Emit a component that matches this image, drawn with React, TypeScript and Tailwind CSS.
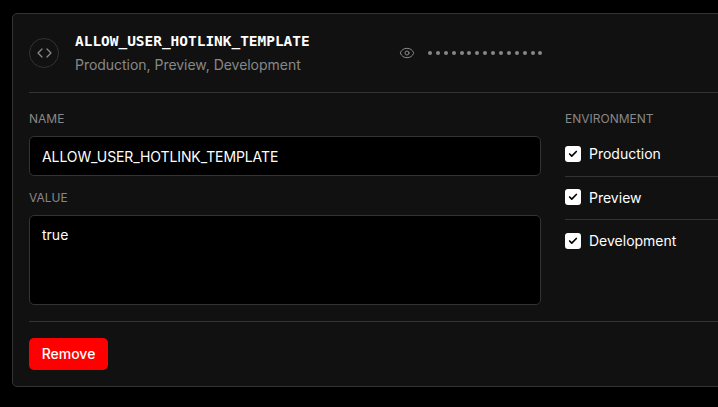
import { Check, Eye } from 'lucide-react';

const environments = ['Production', 'Preview', 'Development'];

function Label({ children }: { children: string }) {
  return <div className="text-[12px] leading-[16px] text-[#888888]">{children}</div>;
}

export default function App() {
  return (
    <div className="h-[407px] w-[718px] overflow-hidden bg-black font-['Inter',sans-serif] text-white">
      <div className="pt-[13px] pl-[12px]">
        <div className="h-[374px] w-[800px] rounded-[5px] border border-[#333333] bg-[#111111] px-4">
          {/* Header */}
          <div className="flex h-[79px] items-center border-b border-[#333333]">
            <div className="flex h-[30px] w-[30px] items-center justify-center rounded-full border border-[#333333]">
              <svg width="15" height="10" viewBox="0 0 15 10" fill="none" stroke="#888888" strokeWidth="1.25" strokeLinecap="round" strokeLinejoin="round">
                <path d="M5 1 L1 5 L5 9" />
                <path d="M10 1 L14 5 L10 9" />
              </svg>
            </div>
            <div className="ml-4 w-[324px]">
              <div className="font-['DejaVu_Sans_Mono',monospace] text-[14.45px] leading-[20px] font-bold">
                ALLOW_USER_HOTLINK_TEMPLATE
              </div>
              <div className="mt-[4px] text-[14px] leading-[20px] tracking-[-0.03px] text-[#888888]">
                Production, Preview, Development
              </div>
            </div>
            <Eye className="h-4 w-4 text-[#888888]" strokeWidth={1.5} />
            <div className="ml-[13px] flex gap-[3.9px]">
              {Array.from({ length: 15 }).map((_, i) => (
                <div key={i} className="h-1 w-1 rounded-full bg-[#888888]" />
              ))}
            </div>
          </div>

          {/* Form */}
          <div className="flex h-[229px] gap-6 border-b border-[#333333] pt-[18px]">
            <div className="w-[512px]">
              <Label>NAME</Label>
              <div className="mt-[9px] flex h-[40px] items-center rounded-[5px] border border-[#333333] bg-black px-3 text-[14px] tracking-[-0.1px]">
                ALLOW_USER_HOTLINK_TEMPLATE
              </div>
              <div className="mt-[14px]">
                <Label>VALUE</Label>
              </div>
              <div className="mt-[9px] h-[90px] rounded-[5px] border border-[#333333] bg-black px-3 py-[9px] text-[14px] leading-[20px]">
                true
              </div>
            </div>
            <div className="flex-1">
              <Label>ENVIRONMENT</Label>
              <div className="mt-[6px]">
                {environments.map((env, i) => (
                  <div
                    key={env}
                    className={`flex items-center gap-2 pb-[2px] ${i === 0 ? 'h-[44px]' : 'h-[43px]'} ${i < 2 ? 'border-b border-[#333333]' : ''}`}
                  >
                    <div className="flex h-4 w-4 items-center justify-center rounded-[3px] bg-white">
                      <Check className="h-[10px] w-[10px] text-black" strokeWidth={4} />
                    </div>
                    <span className="text-[14px]">{env}</span>
                  </div>
                ))}
              </div>
            </div>
          </div>

          {/* Footer */}
          <div className="pt-4">
            <button className="h-8 w-[79px] rounded-[5px] bg-[#ff0000] pb-[2px] text-[14px] font-medium text-white">
              Remove
            </button>
          </div>
        </div>
      </div>
    </div>
  );
}
